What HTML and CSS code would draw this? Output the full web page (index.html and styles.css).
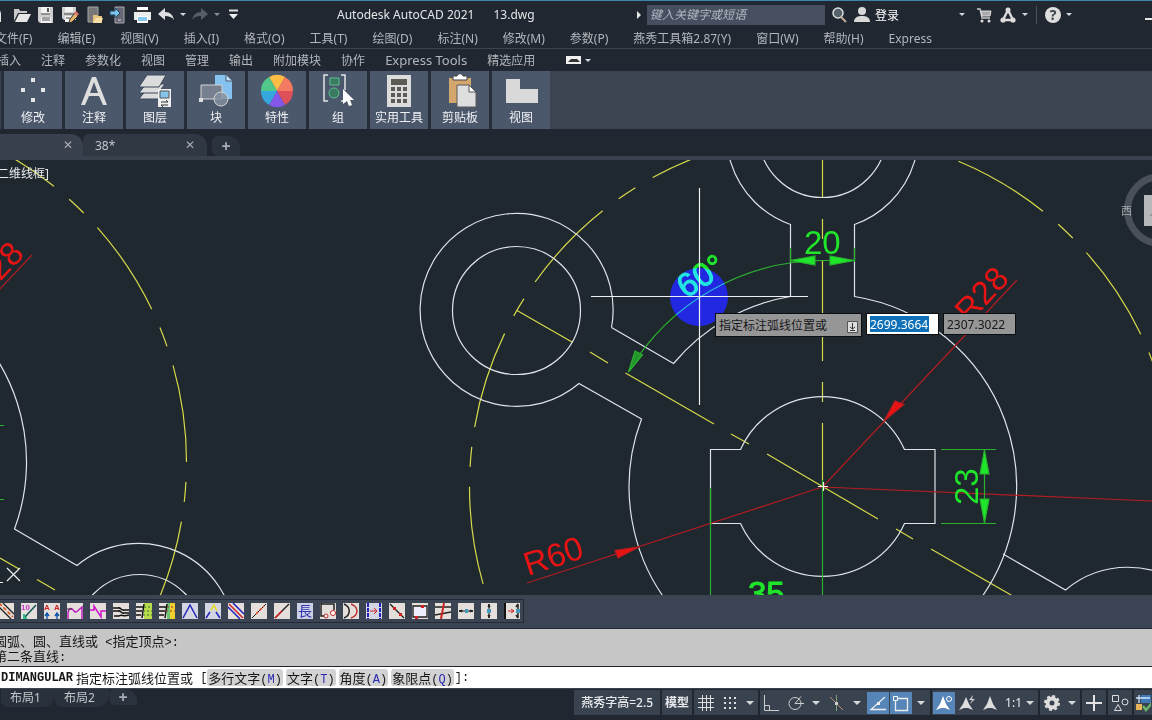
FILE: index.html
```
<!DOCTYPE html>
<html lang="zh-CN">
<head>
  <meta charset="UTF-8">
  <meta name="viewport" content="width=device-width, initial-scale=1.0">
  <title>Autodesk AutoCAD 2021 - 13.dwg</title>
  <link rel="stylesheet" href="styles.css">
</head>
<body>
  <header class="titlebar">
    <div class="quick-access">
      <button aria-label="新建"><svg width="18" height="18"><path d="M0 2h8l4 4v10H0z" fill="#e4e4e4"/><path d="M8 2v4h4" fill="#fff" stroke="#555"/></svg></button>
      <button aria-label="打开"><svg width="18" height="18"><path d="M1 15V3h5l1 2h7v2H5z" fill="#c9c9c9"/><path d="M2 16l4-8h12l-4 8z" fill="#e6e6e6"/></svg></button>
      <button aria-label="保存"><svg width="18" height="18"><path d="M1 1h15v16H3l-2-2z" fill="#cfcfcf"/><path d="M4 1h9v6H4zM4 11h10v6H4z" fill="#f2f2f2"/><path d="M4 8h9M5 12h8M5 14h8" stroke="#555"/><path d="M10 2h2v4h-2z" fill="#555"/></svg></button>
      <button aria-label="另存为"><svg width="18" height="18"><path d="M1 1h14v13H3l-2-2z" fill="#cfcfcf"/><path d="M4 1h8v5H4zM4 10h6v6H4z" fill="#f2f2f2"/><path d="M3 8h10M5 12h4" stroke="#444"/><path d="M8 17l1-4 5-6 3 3-6 6z" fill="#e8b46a" stroke="#333"/><path d="M13 7l2-2 3 3-2 2z" fill="#d9756a"/></svg></button>
      <button aria-label="从 Web 打开"><svg width="18" height="18"><path d="M3 1h10v15H3z" fill="#777" stroke="#a5a5a5"/><path d="M8 17V9h4l1 1h4v7z" fill="#e8c37e"/><path d="M8 17l3-5h7l-2 5z" fill="#f8dfa8"/></svg></button>
      <button aria-label="保存到 Web"><svg width="18" height="18"><path d="M6 1h9v16H6z" fill="#667" stroke="#aaa"/><path d="M1 5h5V2l5 5-5 5V9H1z" fill="#79c3ee" stroke="#24475e"/><path d="M9 14h3" stroke="#ddd"/></svg></button>
      <button aria-label="打印"><svg width="18" height="18"><path d="M4 1h11v5H4z" fill="#fff"/><path d="M1 6h17v8H1z" fill="#ececec"/><path d="M4 5h11" stroke="#333" stroke-width="2"/><path d="M4 10h11v7H4z" fill="#fff"/><path d="M5 11h9v4H5z" fill="#85c7ee"/></svg></button>
      <button aria-label="放弃"><svg width="18" height="18"><path d="M1 8l7-6v4c5 0 8 3 9 8-2-3-5-4-9-4v4z" fill="#e0e0e0"/></svg></button>
      <span class="caret"></span>
      <button aria-label="重做"><svg width="18" height="18"><path d="M17 8l-7-6v4c-5 0-8 3-9 8 2-3 5-4 9-4v4z" fill="#555d66"/></svg></button>
      <span class="caret dim"></span>
      <button aria-label="自定义"><svg width="14" height="18"><path d="M4 4.500h9" stroke="#ddd" stroke-width="2"/><path d="M4 8h9l-4.500 5z" fill="#eee"/></svg></button>
    </div>
    <h1 class="title">Autodesk AutoCAD 2021 <span>13.dwg</span></h1>
    <form class="search">
      <span class="caret-right"></span>
      <input type="text" aria-label="搜索" placeholder="键入关键字或短语">
      <button type="button" aria-label="查找"><svg width="18" height="18"><circle cx="8" cy="7" r="5" fill="#56626b" stroke="#ddd" stroke-width="1.5"/><path d="M11 11l5 5" stroke="#c4aa96" stroke-width="2"/></svg></button>
    </form>
    <button class="login"><svg width="18" height="18"><circle cx="9" cy="5" r="4" fill="#d8d8d8"/><path d="M1 16c0-5 4-6 8-6s8 1 8 6z" fill="#d8d8d8"/></svg>登录</button>
    <div class="account">
      <span class="caret"></span>
      <button class="store" aria-label="应用商店"><svg width="16" height="18"><path d="M1 3h3l2 9h8" fill="none" stroke="#ccc" stroke-width="1.3"/><path d="M5 5h10l-1 5H6z" fill="#aaa" stroke="#ddd"/><circle cx="6" cy="15" r="1.5" fill="#ddd"/><circle cx="13" cy="15" r="1.5" fill="#ddd"/></svg></button>
      <button aria-label="Autodesk"><svg width="18" height="18"><path d="M9 4L4 14h10z" fill="none" stroke="#ddd" stroke-width="2.4"/><circle cx="9" cy="4" r="2.5" fill="#ddd"/><circle cx="4" cy="14" r="2.6" fill="#ddd"/><circle cx="14" cy="14" r="2.6" fill="#ddd"/></svg></button>
      <span class="caret"></span>
      <span class="divider"></span>
      <button class="help" aria-label="帮助">?</button>
      <span class="caret"></span>
    </div>
    <button class="minimize" aria-label="最小化"></button>
  </header>

  <nav class="menubar">
    <a href="#">文件(F)</a><a href="#">编辑(E)</a><a href="#">视图(V)</a><a href="#">插入(I)</a><a href="#">格式(O)</a><a href="#">工具(T)</a><a href="#">绘图(D)</a><a href="#">标注(N)</a><a href="#">修改(M)</a><a href="#">参数(P)</a><a href="#">燕秀工具箱2.87(Y)</a><a href="#">窗口(W)</a><a href="#">帮助(H)</a><a href="#">Express</a>
  </nav>

  <nav class="ribbon-tabs">
    <a href="#">插入</a><a href="#">注释</a><a href="#">参数化</a><a href="#">视图</a><a href="#">管理</a><a href="#">输出</a><a href="#">附加模块</a><a href="#">协作</a><a href="#" class="express">Express Tools</a><a href="#">精选应用</a>
    <button class="ribbon-toggle" aria-label="最小化功能区"></button>
    <span class="caret"></span>
  </nav>

  <section class="ribbon">
    <button class="panel"><svg width="34" height="34"><g fill="#e4e6e8"><path d="M15 4h4v4h-4zM5 14h4v4H5zM25 14h4v4h-4zM15 24h4v4h-4z"/></g></svg>修改</button>
    <button class="panel"><svg width="34" height="34"><path fill-rule="evenodd" d="M4 31L15 3h4l11 28h-4l-4-9H12l-4 9zM13 19h8L17 8z" fill="#dedede"/></svg>注释</button>
    <button class="panel"><svg width="34" height="34"><g fill="#dcdcdc" stroke="#3d485a"><path d="M1 25l7-9h19l-7 9z"/><path d="M1 19l7-9h19l-7 9z"/><path d="M1 13L9 1h19l-7 12z"/></g><path d="M20 15h13v18H20z" fill="#eee"/><path d="M22 17h9v7h-9z" fill="#86c5ec" stroke="#555"/><path d="M23 28h7l-2-2M30 31h-7l2 2" stroke="#333" fill="none"/></svg>图层</button>
    <button class="panel"><svg width="34" height="34"><path d="M16 1h11l6 6v18H16z" fill="#86c2ef"/><path d="M27 1v6h6" fill="#c4e3fb" stroke="#4b586c"/><path d="M2 11h21v14H2z" fill="#768090" stroke="#d5d5d5"/><circle cx="22" cy="25" r="7" fill="#86909e" fill-opacity=".8" stroke="#d5d5d5"/><path d="M0 24h4v4H0z" fill="#ddd"/></svg>块</button>
    <button class="panel"><svg width="34" height="34"><path d="M17 17L9 3a16 16 0 0 1 16 0z" fill="#ffbd45"/><path d="M17 17l8-14a16 16 0 0 1 8 14z" fill="#f47b62"/><path d="M17 17h16a16 16 0 0 1-8 14z" fill="#df5058"/><path d="M17 17l8 14a16 16 0 0 1-16 0z" fill="#8358e8"/><path d="M17 17L9 31a16 16 0 0 1-8-14z" fill="#35a9df"/><path d="M17 17H1A16 16 0 0 1 9 3z" fill="#51c889"/></svg>特性</button>
    <button class="panel"><svg width="34" height="34"><path d="M7 1H3v26h4M20 1h4v15M20 27h2" fill="none" stroke="#e5e5e5" stroke-width="1.5"/><path d="M9 4h9v7H9z" fill="#397a60" stroke="#5bc090"/><circle cx="13" cy="19" r="5" fill="#397a60" stroke="#5bc090"/><path d="M22 15v15l4-3 2 5 3-1-2-5h4z" fill="#fff"/></svg>组</button>
    <button class="panel"><svg width="34" height="34"><path d="M5 1h24v32H5z" fill="#dcdcdc"/><path d="M9 5h16v6H9zM9 13h4v4H9zM15 13h4v4h-4zM21 13h4v4h-4zM9 19h4v4H9zM15 19h4v4h-4zM21 19h4v4h-4zM9 25h4v4H9zM15 25h4v4h-4zM21 25h4v4h-4z" fill="#5e5b57"/></svg>实用工具</button>
    <button class="panel"><svg width="34" height="34"><path d="M6 4h22v25H6z" fill="#d2a66d"/><path d="M10 2h4c1-3 5-3 6 0h4v4H10z" fill="#fff" stroke="#444"/><path d="M14 11h12l7 7v15H14z" fill="#dedede" stroke="#5e5a56"/><path d="M26 11v7h7z" fill="#fff" stroke="#555"/></svg>剪贴板</button>
    <button class="panel"><svg width="34" height="34"><path d="M2 5h14v10h18v14H2z" fill="#dadada"/></svg>视图</button>
  </section>

  <nav class="doc-tabs">
    <div class="doc-tab first"><button aria-label="关闭">✕</button></div>
    <div class="doc-tab"><a href="#">38*</a><button aria-label="关闭">✕</button></div>
    <button class="new-tab" aria-label="新图形">+</button>
  </nav>

  <main class="canvas">
    <svg class="drawing" viewBox="0 160 1152 435" preserveAspectRatio="xMinYMin slice">
      <!-- centre lines -->
      <g class="center">
        <circle class="pitch" cx="822.5" cy="487" r="353"/>
        <circle class="pitch" cx="-166.5" cy="462" r="353"/>
        <path d="M822.5 160V198M822.5 219V239M822.5 260V361M822.5 382V402M822.5 423V487"/>
        <path d="M517 310.5L572 342M590 352L608 363M625.5 373L714 424M731 434L749 444M767 454L878 519M896 529L913 539M931 549L1018 599"/>
        <path d="M0 558L19 569M37 579.5L55 590"/>
      </g>
      <!-- part outline -->
      <g class="outline">
        <circle cx="516.5" cy="310.5" r="64"/>
        <circle cx="822.5" cy="133.5" r="64"/>
        <path d="M611.5 327.5A96.5 96.5 0 1 0 579 383.5L641.5 419A192.5 192.5 0 0 0 676 613"/>
        <path d="M611.5 327.5L673.5 363.5A192.5 192.5 0 0 1 790.5 296.5V224.5A96 96 0 1 1 854.5 224.5V296.5A192.5 192.5 0 0 1 971 611"/>
        <path d="M1003 554L1065.5 590A96.5 96.5 0 0 1 1190 590"/>
        <path d="M740.5 449.5A90 90 0 0 1 904.5 449.5H935V523.5H904.5A90 90 0 0 1 740.5 523.5H710.5V449.5z"/>
        <path d="M-60 301A193 193 0 0 1 14.5 529L77 565.5A96.5 96.5 0 0 1 235 638"/>
        <circle cx="139.5" cy="638.5" r="64"/>
      </g>
      <!-- radius dimensions -->
      <g class="dim-radius">
        <path d="M822.5 487L1017 280M822.5 487L1152 501M822.5 487L527 583M-40 331L32 255"/>
        <path class="arrow" d="M884 421L895 401L904 404.5zM640 546.5L615 550.5L618 558z"/>
        <text transform="translate(969 324) rotate(-46.8)">R28</text>
        <text transform="translate(-16 299) rotate(-46.8)">R28</text>
        <text transform="translate(528 576) rotate(-18)">R60</text>
      </g>
      <!-- linear and angular dimensions -->
      <g class="dim-linear">
        <path d="M628.5 371.5A226.5 226.5 0 0 1 822.5 260.5M790.5 248V262M854.5 248V262M790 260.5H854M941 449.5H996M941 523.5H996M984.5 450V523M710.5 488V595M822.5 480V595M0 425.5H4M0 499.5H4"/>
        <path class="arrow" d="M790 260.5L815 256V265zM854.5 260.5L830 256V265zM984.5 450L980 474H989zM984.5 523L980 499H989z"/>
        <path class="arrow-dark" d="M628.5 372L635 351L642.5 355z"/>
        <text x="804" y="254">20</text>
        <text transform="translate(978 505) rotate(-90)">23</text>
        <text class="heavy" x="748" y="605">35</text>
        <text class="heavy" transform="translate(686 299) rotate(-33)">60°</text>
      </g>
      <circle class="pick" cx="699" cy="297" r="29"/>
      <path class="cursor" d="M699.5 188V405M591 296.5H808M818 486.5H828M823.5 482V491"/>
      <path class="cursor" d="M7 568L20 581M20 568L7 581M0 582.5H3"/>
      <circle class="compass" cx="1161" cy="210" r="33.5"/>
      <path d="M1144 195H1160V226H1144z" fill="#b6b8ba"/>
      <path d="M1150 215H1155" stroke="#777"/>
    </svg>
    <span class="visual-style">二维线框]</span>
    <span class="west">西</span>
    <div class="dynamic-input">
      <label for="coord-x">指定标注弧线位置或 <svg width="11" height="12"><path d="M.5.5h10v11H.5z" fill="#ddd" stroke="#555"/><path d="M5.5 2v6M3 6l2.5 2L8 6M3 9.5h5" fill="none" stroke="#333"/></svg></label>
      <input class="active" type="text" id="coord-x" value="2699.3664">
      <input type="text" aria-label="Y" value="2307.3022">
    </div>
  </main>

  <section class="tool-strip">
    <div class="tools">
      <button aria-label="双线"><svg width="16" height="16"><path d="M0 3l13 13M5 0l11 11" stroke="#222" stroke-width="1.3"/><path d="M1 0l14 14" stroke="#d52" stroke-width="1.6" stroke-dasharray="4 2"/></svg></button>
      <button aria-label="标高"><svg width="16" height="16"><text class="mini" x="0" y="7" fill="#c3c">10</text><path d="M3 15L15 2" stroke="#155" stroke-width="1.5"/><path d="M3 11v4h3" stroke="#3b8" stroke-width="2" fill="none"/></svg></button>
      <button aria-label="文字对齐"><svg width="16" height="16"><text class="mini" x="0" y="7" fill="#c22">A</text><text class="mini" x="10" y="7" fill="#c22">A</text><path d="M3 16v-5M1 13l2-3 2 3M13 16v-5M11 13l2-3 2 3" stroke="#15a" stroke-width="1.4" fill="none"/></svg></button>
      <button aria-label="曲线"><svg width="16" height="16"><path d="M1 16V9c2-5 4-4 6-1s4-1 8-4v12" fill="none" stroke="#b1b" stroke-width="1.4"/><path d="M0 6h5" stroke="#333"/></svg></button>
      <button aria-label="折断线"><svg width="16" height="16"><path d="M0 7h4V3l7 11V8h5" fill="none" stroke="#c1c" stroke-width="1.5"/></svg></button>
      <button aria-label="波浪线"><svg width="16" height="16"><path d="M0 5h5c3-1 3 3 6 2h5M0 8h5c3-1 3 3 6 2h5M1 13h5c3-2 4 1 10-1" fill="none" stroke="#111" stroke-width="1.5"/></svg></button>
      <button aria-label="图案一"><svg width="16" height="16"><path d="M8 0h8v16H8z" fill="#b9dc4c"/><path d="M0 4h8M0 8h6M0 12h5M8 1L6 15" stroke="#111" fill="none" stroke-width="1.5"/><path d="M8 4h8M7 8h9M7 12h9" stroke="#363" stroke-dasharray="2"/></svg></button>
      <button aria-label="图案二"><svg width="16" height="16"><path d="M8 0h8v16H8z" fill="#f1d02e"/><path d="M8 0h3v16H8z" fill="#6cc46e"/><path d="M0 4h8M0 8h6M0 12h5M8 1L6 15" stroke="#111" fill="none" stroke-width="1.5"/><path d="M8 4h8M7 8h9" stroke="#a33" stroke-dasharray="2"/></svg></button>
      <button class="cool" aria-label="夹角"><svg width="16" height="16"><path d="M1 15L8 2l7 13" fill="none" stroke="#22b" stroke-width="1.5"/></svg></button>
      <button class="cool" aria-label="断开夹角"><svg width="16" height="16"><path d="M1 15l4-6M15 15l-4-6" stroke="#22b" stroke-width="1.5"/><path d="M6 7l3-5 3 6" fill="none" stroke="#e8d91c" stroke-width="1.5"/></svg></button>
      <button aria-label="平行线"><svg width="16" height="16"><path d="M0 4l12 12M5 0l11 11" stroke="#22b" stroke-width="1.5"/><path d="M1 1l14 14" stroke="#c22" stroke-width="1.5"/></svg></button>
      <button aria-label="点划线"><svg width="16" height="16"><path d="M1 15L15 1" stroke="#222"/><path d="M5 11l8-8" stroke="#d42" stroke-width="1.5" stroke-dasharray="3 2"/></svg></button>
      <button aria-label="直线"><svg width="16" height="16"><path d="M1 15L15 1" stroke="#222" stroke-width="1.5"/><path d="M1 15l7-7" stroke="#d22" stroke-width="1.5"/></svg></button>
      <button aria-label="长度" class="length">長</button>
      <button aria-label="圆角"><svg width="16" height="16"><path d="M1 0v13h5M1 1h13v6" fill="none" stroke="#222" stroke-width="1.5"/><circle cx="6" cy="13" r="2" fill="#fff" stroke="#c22"/><circle cx="13" cy="10" r="2.5" fill="#fff" stroke="#c22"/></svg></button>
      <button aria-label="圆弧"><svg width="16" height="16"><path d="M1 1c7 3 7 11 0 14" fill="none" stroke="#222" stroke-width="1.5"/><path d="M8 1c8 3 8 11 0 14" fill="none" stroke="#b33" stroke-width="1.5"/></svg></button>
      <button class="cool" aria-label="间距"><svg width="16" height="16"><path d="M2 0v16M14 0v16" stroke="#22b" stroke-width="2" stroke-dasharray="4 1"/><path d="M4 8h7M8 5l3 3-3 3" fill="none" stroke="#c22"/></svg></button>
      <button aria-label="两点线"><svg width="16" height="16"><path d="M1 1l14 14" stroke="#222" stroke-width="1.4"/><path d="M4 4h3v3H4zM10 10h3v3h-3z" fill="#c22"/></svg></button>
      <button aria-label="矩形"><svg width="16" height="16"><path d="M1 3h14v11H1z" fill="#eef" stroke="#222" stroke-width="1.4"/><path d="M9 2h3v3H9zM3 13h3v3H3z" fill="#c22"/></svg></button>
      <button aria-label="修剪"><svg width="16" height="16"><path d="M0 4h16M0 12l16-3" stroke="#222" stroke-width="1.6"/><path d="M9 0L6 16" stroke="#c22" stroke-width="2"/></svg></button>
      <button aria-label="水平标注"><svg width="16" height="16"><path d="M1 8h14M1 8l3-1v2zM15 8l-3-1v2z" stroke="#222" fill="#222"/><path d="M7 6h3v4H7z" fill="#4698b8"/></svg></button>
      <button aria-label="垂直标注"><svg width="16" height="16"><path d="M8 1v14M8 1L7 4h2zM8 15l-1-3h2z" stroke="#222" fill="#222"/><path d="M6 6h4v4H6z" fill="#4698b8"/></svg></button>
      <button aria-label="对齐标注"><svg width="16" height="16"><path d="M1 0v16" stroke="#111" stroke-width="2"/><path d="M4 8h6M7 6l3 2-3 2" stroke="#c22" fill="none"/><path d="M14 1v14M14 1l-2 3M14 15l-2-3" stroke="#222" stroke-width="1.5"/><path d="M12 6h4v4h-4z" fill="#4698b8"/></svg></button>
    </div>
  </section>

  <section class="history">
    <p>圆弧、圆、直线或<span> &lt;</span>指定顶点<span>&gt;:</span></p>
    <p>第二条直线<span>:</span></p>
  </section>
  <section class="command">
    <b>DIMANGULAR</b> 指定标注弧线位置或<span> [</span><button>多行文字<span>(<i>M</i>)</span></button><button>文字<span>(<i>T</i>)</span></button><button>角度<span>(<i>A</i>)</span></button><button>象限点<span>(<i>Q</i>)</span></button><span>]:</span>
  </section>

  <footer class="statusbar">
    <nav class="layouts">
      <a href="#">布局1</a><a href="#">布局2</a><button aria-label="新布局">+</button>
    </nav>
    <div class="status">
      <div class="group text"><button>燕秀字高=2.5</button></div>
      <div class="group model"><button>模型</button></div>
      <div class="group">
        <button class="w24" aria-label="栅格"><svg width="18" height="18"><path d="M5.5 1v16M9.5 1v16M13.5 1v16M1 4.5h16M1 8.5h16M1 13.5h16" stroke="#ddd"/></svg></button>
        <button class="w24" aria-label="捕捉"><svg width="18" height="18"><path d="M3 4h14M3 9h14M3 14h14" stroke="#ddd" stroke-width="2" stroke-dasharray="2 3"/></svg></button>
        <button class="w16" aria-label="捕捉选项"><span class="caret wide"></span></button>
      </div>
      <div class="group">
        <button class="w24" aria-label="正交"><svg width="18" height="18"><path d="M1.5 1v15.5H16M1.5 11.5h5v5" fill="none" stroke="#ccc"/></svg></button>
        <button class="w24" aria-label="极轴"><svg width="18" height="18"><circle cx="8" cy="9.5" r="6" fill="none" stroke="#ccc"/><path d="M8 9.5h9M8 9.5l6-7" stroke="#ccc"/></svg></button>
        <button class="w16" aria-label="极轴选项"><span class="caret wide"></span></button>
        <button class="w24" aria-label="等轴测"><svg width="18" height="18"><path d="M9.5 1v16" stroke="#7fa070"/><path d="M3 3l13 13" stroke="#b88c7c"/><path d="M8 8h3v3H8z" fill="#ccc"/></svg></button>
        <button class="w18" aria-label="等轴测选项"><span class="caret wide"></span></button>
        <button class="w22 on" aria-label="对象捕捉追踪"><svg width="18" height="18"><path d="M16 3L2 15.5h15" fill="none" stroke="#eee" stroke-width="1.3"/><path d="M8 8h3v3H8z" fill="#eee"/></svg></button>
        <button class="w22 on" aria-label="对象捕捉"><svg width="18" height="18"><path d="M3.5 7v9.5h12v-12H6" fill="none" stroke="#eee" stroke-width="1.3"/><path d="M1.5 2.5h4v4h-4z" fill="none" stroke="#fff"/></svg></button>
        <button class="w18" aria-label="捕捉设置"><span class="caret wide"></span></button>
      </div>
      <div class="group">
        <button class="w22 on" aria-label="注释可见性"><svg width="18" height="18"><path d="M8 2l3 8 4 6-5-2H6l-5 2 4-6z" fill="#fff"/><circle cx="14" cy="5" r="2.5" fill="none" stroke="#fff"/></svg></button>
        <button class="w24" aria-label="自动缩放"><svg width="18" height="18"><path d="M8 3l3 7 4 6-5-2H6l-5 2 4-6z" fill="#ddd"/><path d="M15 1l-4 5h3l-2 4 5-5h-3z" fill="#ccc"/></svg></button>
        <button class="w22" aria-label="注释比例"><svg width="18" height="18"><path d="M9 2l3 8 4 6-5-2H7l-5 2 4-6z" fill="#ddd"/></svg></button>
        <button class="scale">1:1 <span class="caret wide"></span></button>
      </div>
      <div class="group">
        <button class="w24" aria-label="切换工作空间"><svg width="18" height="18"><circle cx="9" cy="9" r="4.5" fill="none" stroke="#ddd" stroke-width="4"/><circle cx="9" cy="9" r="7" fill="none" stroke="#ddd" stroke-width="2" stroke-dasharray="3 2.5"/></svg></button>
        <button class="w16" aria-label="工作空间选项"><span class="caret wide"></span></button>
      </div>
      <div class="group"><button class="w24" aria-label="注释监视器"><svg width="18" height="18"><path d="M9 1v16M1 9h16" stroke="#e4e4e4" stroke-width="2"/></svg></button></div>
      <div class="group"><button class="w24" aria-label="隔离对象"><svg width="18" height="18"><path d="M1.5 1.5h6v6h-6zM7 10.5l-3.5 6h7z" fill="none" stroke="#ddd"/><circle cx="14" cy="8" r="3" fill="none" stroke="#ddd"/></svg></button></div>
      <div class="group"><button class="w18" aria-label="硬件加速"><svg width="16" height="18"><path d="M6 1h10v8H6z" fill="#3f78b5"/><path d="M1 10h6v6H1z" fill="#e5b45a"/><path d="M4 1v8M1 4h14" stroke="#cfe8ff" stroke-width="1.3"/><path d="M8 12l3 4 6-7" fill="none" stroke="#69b66d" stroke-width="2.5"/></svg></button></div>
    </div>
  </footer>
</body>
</html>
```
FILE: styles.css
```
* {
  margin: 0;
  padding: 0;
  box-sizing: border-box;
}
body {
  display: flex;
  flex-direction: column;
  height: 100vh;
  overflow: hidden;
  background: #202731;
  color: #c4c7cb;
  font-family: "Noto Sans", "Noto Sans CJK SC", sans-serif;
  font-size: 12px;
  white-space: nowrap;
}
button, input {
  border: none;
  background: none;
  color: inherit;
  font: inherit;
  white-space: nowrap;
}
a {
  color: inherit;
  text-decoration: none;
}
svg {
  display: block;
}
.caret {
  flex: none;
  border: 3px solid transparent;
  border-top: 3px solid #d5d7da;
  border-bottom: none;
}
.caret.dim {
  border-top-color: #8a9097;
}
.caret.wide {
  border-width: 4px 4px 0;
}

/* title bar */
.titlebar {
  display: flex;
  align-items: center;
  flex: none;
  height: 28px;
  border-top: 1px solid #3b87a8;
}
.quick-access {
  display: flex;
  align-items: center;
  gap: 6px;
  width: 337px;
  margin-left: -11px;
}
.quick-access .caret {
  margin: 0 -1px;
}
.title {
  flex: none;
  width: 298px;
  margin-left: 11px;
  color: #e4e5e7;
  font-size: 12px;
  font-weight: 400;
}
.title span {
  margin-left: 16px;
}
.search {
  display: flex;
  align-items: center;
}
.caret-right {
  margin: 0 6px 0 2px;
  border: 4px solid transparent;
  border-left: 4px solid #e8e8e8;
  border-right: none;
}
.search input {
  width: 178px;
  height: 20px;
  padding-left: 3px;
  background: #454f60;
  font-style: italic;
}
.search input::placeholder {
  color: #b4b9c2;
}
.search button {
  margin-left: 5px;
}
.login {
  display: flex;
  align-items: center;
  gap: 4px;
  margin-left: 5px;
  color: #fff;
}
.account {
  display: flex;
  align-items: center;
  gap: 5px;
  margin-left: 60px;
}
.account .store {
  margin: 0 2px 0 6px;
}
.divider {
  width: 1px;
  height: 18px;
  margin: 0 3px;
  background: #4a525c;
}
.help {
  width: 16px;
  height: 16px;
  border-radius: 50%;
  background: #dedede;
  color: #39424c;
  font-size: 14px;
  font-weight: 700;
  line-height: 16px;
}
.minimize {
  width: 7px;
  height: 2px;
  margin-top: 8px;
  margin-left: auto;
  background: #e6e6e6;
}

/* menus */
.menubar, .ribbon-tabs {
  display: flex;
  align-items: center;
  flex: none;
  color: #b3b7bc;
}
.menubar {
  gap: 25px;
  height: 21px;
  margin-left: -5px;
  border-bottom: 1px solid #3d444e;
}
.ribbon-tabs {
  gap: 20px;
  height: 22px;
  margin-left: -3px;
}
.ribbon-tabs .express {
  font-size: 13px;
}
.ribbon-toggle {
  width: 15px;
  height: 8px;
  margin-left: 11px;
  background: #f0f0f0;
}
.ribbon-toggle::before {
  content: "";
  display: block;
  width: 6px;
  margin: 0 auto;
  border: 3px solid transparent;
  border-top: none;
  border-bottom-color: #333;
}
.ribbon-tabs .caret {
  margin-left: -16px;
}

/* ribbon */
.ribbon {
  display: flex;
  flex: none;
  height: 58px;
  padding-left: 1px;
  background: #3c4452;
}
.panel {
  display: flex;
  flex-direction: column;
  align-items: center;
  gap: 2px;
  width: 61px;
  padding-top: 3px;
  border-left: 3px solid #252d39;
  background: #4b586c;
  color: #f0f1f3;
  line-height: 16px;
}

/* drawing tabs */
.doc-tabs {
  display: flex;
  align-items: flex-end;
  flex: none;
  height: 31px;
  border-bottom: 4px solid #3a414e;
}
.doc-tab {
  display: flex;
  align-items: center;
  justify-content: space-between;
  width: 124px;
  height: 22px;
  padding: 0 12px;
  border-radius: 6px 12px 0 0;
  background: #303844;
}
.doc-tab.first {
  width: 83px;
  justify-content: flex-end;
  padding: 0 10px;
  border-radius: 0 12px 0 0;
  background: #3a414e;
}
.doc-tab button {
  color: #a9aeb5;
  font-family: "DejaVu Sans", sans-serif;
  font-size: 12px;
  font-weight: 700;
}
.new-tab, .layouts button {
  width: 28px;
  height: 20px;
  margin-left: 5px;
  border-radius: 6px 12px 0 6px;
  background: #2a323d;
  color: #a9aeb5;
  font-size: 16px;
  font-weight: 700;
  line-height: 20px;
}

/* model space */
.canvas {
  position: relative;
  flex: 1;
  min-height: 0;
  overflow: hidden;
  background: #1f272f;
}
.drawing {
  width: 100%;
  height: 100%;
}
.drawing path, .drawing circle {
  stroke-width: 1.2px;
}
.center, .outline, .dim-radius, .dim-linear, .cursor {
  fill: none;
}
.center {
  stroke: #d6d94a;
}
.pitch {
  stroke-dasharray: 98.4 20 20 20;
  stroke-dashoffset: 98.4;
}
.outline {
  stroke: #dfe3ea;
}
.cursor {
  stroke: #eef0f2;
}
.drawing text {
  stroke: none;
  font-family: "Liberation Sans", sans-serif;
  font-size: 33px;
}
.dim-radius {
  stroke: #b01d22;
}
.dim-radius text, .dim-radius .arrow {
  fill: #e81414;
}
.dim-linear {
  stroke: #2bb02f;
}
.dim-linear text, .dim-linear .arrow {
  fill: #1fe62a;
}
.dim-linear .arrow-dark {
  fill: #22962a;
}
.drawing .heavy {
  stroke: #1fe62a;
  stroke-width: 1px;
}
.pick {
  fill: #2222e0;
  mix-blend-mode: lighten;
}
.drawing .compass {
  fill: none;
  stroke: #4a5059;
  stroke-width: 7px;
}
.drawing .mini {
  stroke: none;
}
.visual-style {
  position: absolute;
  left: -3px;
  top: 4px;
  color: #e8eaec;
}
.west {
  position: absolute;
  right: 20px;
  top: 42px;
  color: #a5a9ae;
  font-size: 11px;
}
.dynamic-input {
  position: absolute;
  left: 715px;
  top: 153px;
  display: flex;
  align-items: flex-start;
  gap: 4px;
  color: #16181b;
}
.dynamic-input label {
  display: flex;
  align-items: center;
  justify-content: space-between;
  width: 147px;
  height: 24px;
  padding: 0 3px;
  border: 1px solid #0c0e11;
  background: #969696;
}
.dynamic-input label svg {
  margin-top: 4px;
}
.dynamic-input input {
  width: 73px;
  height: 22px;
  padding: 2px 3px;
  border: 1px solid #0c0e11;
  background: #969696;
}
.dynamic-input .active {
  padding-right: 9px;
  background: linear-gradient(#0f70b7, #0f70b7) content-box no-repeat, #fff;
  color: #fff;
}

/* plugin toolbar */
.tool-strip {
  display: flex;
  align-items: center;
  flex: none;
  height: 34px;
  padding-bottom: 1px;
  border-bottom: 1px solid #222a36;
  background: #3b4453;
}
.tools {
  display: flex;
  gap: 7px;
  padding: 3px;
  margin-left: -6px;
  border: 1px solid #242b37;
}
.tools button {
  width: 16px;
  height: 16px;
  background: #e4dfdb;
}
.tools .cool {
  background: #d3d6e2;
}
.mini {
  font: 700 8px "Liberation Sans", sans-serif;
}
.tools .length {
  background: #ccd0e6;
  color: #3337b0;
  font-size: 14px;
  line-height: 16px;
}

/* command line */
.history, .command {
  flex: none;
  color: #161616;
  font-family: "Noto Sans CJK SC", sans-serif;
  font-size: 13px;
}
.history {
  height: 37px;
  padding-top: 4px;
  background: #c6c6c6;
  line-height: 15px;
}
.history p {
  height: 15px;
  margin-left: -6px;
  white-space: pre;
}
.history span, .command span {
  font-family: "Liberation Mono", monospace;
  font-size: 12px;
  line-height: 1;
}
.command {
  display: flex;
  align-items: center;
  height: 22px;
  border-top: 1px solid #20262f;
  background: #fff;
  white-space: pre;
}
.command b {
  margin-left: 1px;
  font-family: "Liberation Mono", monospace;
  font-size: 12px;
}
.command button {
  height: 17px;
  margin-right: 3px;
  padding: 0 1px;
  border-radius: 3px;
  background: #d2d2d2;
  line-height: 15px;
}
.command button:last-of-type {
  margin-right: 1px;
}
.command i {
  color: #2a2ab0;
  font-style: normal;
}

/* status bar */
.statusbar {
  display: flex;
  justify-content: space-between;
  flex: none;
  height: 32px;
  border-top: 1px solid #3a424d;
}
.layouts {
  display: flex;
  margin-left: 1px;
}
.layouts a {
  width: 54px;
  height: 18px;
  padding-left: 9px;
  border-radius: 0 0 12px 6px;
  background: #29313c;
  line-height: 18px;
}
.layouts button {
  height: 16px;
  margin-left: 0;
  line-height: 16px;
}
.status {
  display: flex;
  gap: 2px;
  height: 26px;
  padding-top: 1px;
}
.group {
  display: flex;
  align-items: center;
  background: #39424f;
  color: #e8eaed;
}
.group button {
  display: flex;
  align-items: center;
  justify-content: center;
  height: 22px;
}
.group .w16 {
  width: 16px;
}
.group .w18 {
  width: 18px;
}
.group .w22 {
  width: 22px;
}
.group .w24 {
  width: 24px;
}
.group .on {
  margin-left: 1px;
  background: #5685b8;
}
.group.text {
  padding: 0 7px;
  font-weight: 500;
}
.group.model {
  padding: 0 3px;
  font-weight: 700;
}
.group.text button, .group.model button {
  padding-bottom: 2px;
}
.group .scale {
  gap: 4px;
  padding: 0 4px;
}
```
